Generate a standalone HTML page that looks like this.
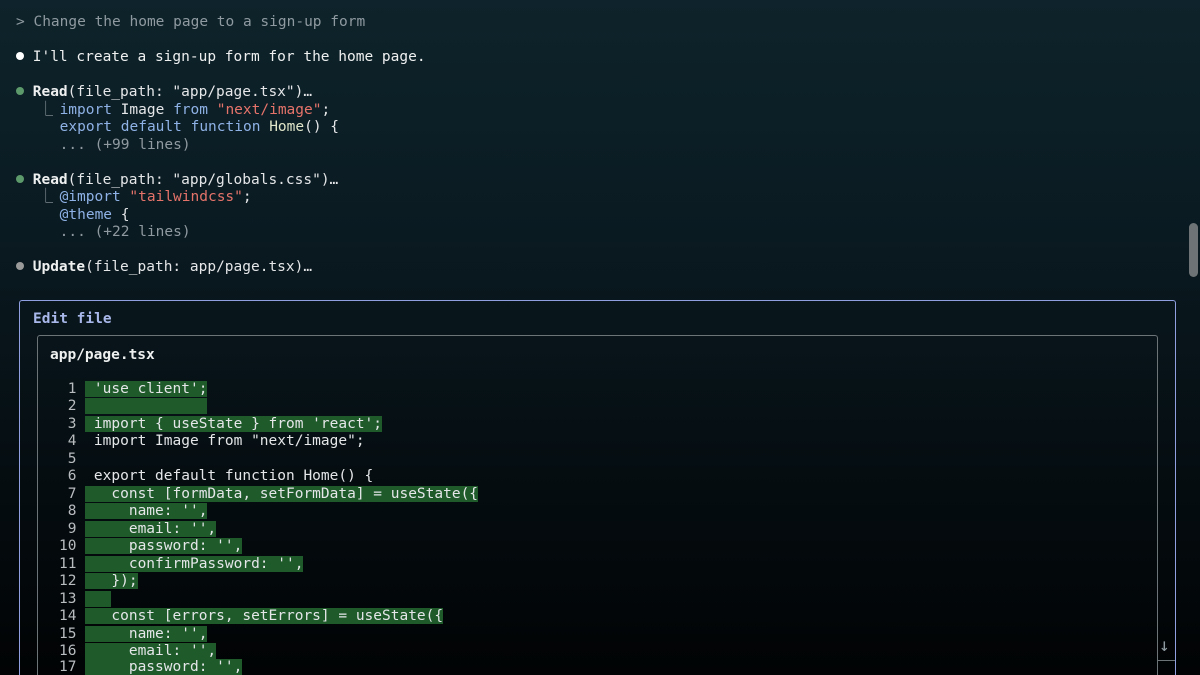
<!DOCTYPE html>
<html><head><meta charset="utf-8"><style>
html,body{margin:0;padding:0;width:1200px;height:675px;overflow:hidden}
body{position:relative;background:linear-gradient(180deg,#0e232b 0%,#0a1a21 35%,#050d11 70%,#010304 100%);font-family:"DejaVu Sans Mono","Liberation Mono",monospace;font-size:14.5px;color:#e4e6e8}
.l{position:absolute;white-space:pre;line-height:17.5px;height:17.5px}
.g{color:#8f9aa0}.b{color:#8fb2e6}.r{color:#e5736a}.h{color:#dfe5c8}.w{color:#eef0f0}
.bold{font-weight:bold}
.dot{display:inline-block;width:8px;height:8px;border-radius:50%;vertical-align:middle;position:relative;top:-1px}
.hl{background:#1e5a2a}
.tr{display:inline-block;width:26.1px;padding-left:5px;box-sizing:border-box;color:#8f9aa0}
#outer{position:absolute;left:19px;top:300px;width:1157px;height:375px;box-sizing:border-box;border:1px solid #8f9fe0;border-bottom:0;border-radius:3px 3px 0 0}
#inner{position:absolute;left:37px;top:335px;width:1121px;height:340px;box-sizing:border-box;border:1px solid #6c7478;border-bottom:0;border-radius:3px 3px 0 0}
.n{color:#b8bcbf}
</style></head><body>
<div style="position:absolute;left:0;top:2.5px;width:1200px;height:672px;overflow:hidden">
<div class="l g" style="left:16px;top:11px">&gt; Change the home page to a sign-up form</div>
<div class="l w" style="left:16px;top:46px"><span class="dot" style="background:#fff"></span> I'll create a sign-up form for the home page.</div>
<div class="l" style="left:16px;top:81px"><span class="dot" style="background:#5d9a6b"></span> <span class="bold w">Read</span>(file_path: "app/page.tsx")…</div>
<div class="l" style="left:16px;top:99px">  <span class="tr">⎿</span><span class="b">import</span> Image <span class="b">from</span> <span class="r">"next/image"</span>;</div>
<div class="l" style="left:16px;top:116px">     <span class="b">export default function</span> <span class="h">Home</span>() {</div>
<div class="l g" style="left:16px;top:134px">     ... (+99 lines)</div>
<div class="l" style="left:16px;top:169px"><span class="dot" style="background:#5d9a6b"></span> <span class="bold w">Read</span>(file_path: "app/globals.css")…</div>
<div class="l" style="left:16px;top:186px">  <span class="tr">⎿</span><span class="b">@import</span> <span class="r">"tailwindcss"</span>;</div>
<div class="l" style="left:16px;top:204px">     <span class="b">@theme</span> {</div>
<div class="l g" style="left:16px;top:221px">     ... (+22 lines)</div>
<div class="l" style="left:16px;top:256px"><span class="dot" style="background:#9a9a9a"></span> <span class="bold w">Update</span>(file_path: app/page.tsx)…</div>
<div class="l bold" style="left:33px;top:308px;color:#a9b8ea">Edit file</div>
<div class="l bold w" style="left:50px;top:344px">app/page.tsx</div>
<div class="l" style="left:59px;top:378px"><span class="n"> 1</span> <span class="hl"> 'use client';</span></div>
<div class="l" style="left:59px;top:395.5px"><span class="n"> 2</span> <span class="hl">              </span></div>
<div class="l" style="left:59px;top:413px"><span class="n"> 3</span> <span class="hl"> import { useState } from 'react';</span></div>
<div class="l" style="left:59px;top:430.5px"><span class="n"> 4</span>  import Image from "next/image";</div>
<div class="l" style="left:59px;top:448px"><span class="n"> 5</span></div>
<div class="l" style="left:59px;top:465.5px"><span class="n"> 6</span>  export default function Home() {</div>
<div class="l" style="left:59px;top:483px"><span class="n"> 7</span> <span class="hl">   const [formData, setFormData] = useState({</span></div>
<div class="l" style="left:59px;top:500.5px"><span class="n"> 8</span> <span class="hl">     name: '',</span></div>
<div class="l" style="left:59px;top:518px"><span class="n"> 9</span> <span class="hl">     email: '',</span></div>
<div class="l" style="left:59px;top:535.5px"><span class="n">10</span> <span class="hl">     password: '',</span></div>
<div class="l" style="left:59px;top:553px"><span class="n">11</span> <span class="hl">     confirmPassword: '',</span></div>
<div class="l" style="left:59px;top:570.5px"><span class="n">12</span> <span class="hl">   });</span></div>
<div class="l" style="left:59px;top:588px"><span class="n">13</span> <span class="hl">   </span></div>
<div class="l" style="left:59px;top:605.5px"><span class="n">14</span> <span class="hl">   const [errors, setErrors] = useState({</span></div>
<div class="l" style="left:59px;top:623px"><span class="n">15</span> <span class="hl">     name: '',</span></div>
<div class="l" style="left:59px;top:640.5px"><span class="n">16</span> <span class="hl">     email: '',</span></div>
<div class="l" style="left:59px;top:656px;height:16px;overflow:hidden"><span class="n">17</span> <span class="hl">     password: '',</span></div>
</div>
<div id="outer"></div><div id="inner"></div>
<div style="position:absolute;left:1189px;top:223px;width:9px;height:54px;border-radius:5px;background:#6e7476"></div>
<div style="position:absolute;left:1157px;top:660px;width:18px;border-top:1px solid #6c7478"></div>
<div class="l g" style="left:1159px;top:637px;font-size:18px">↓</div>
</body></html>
